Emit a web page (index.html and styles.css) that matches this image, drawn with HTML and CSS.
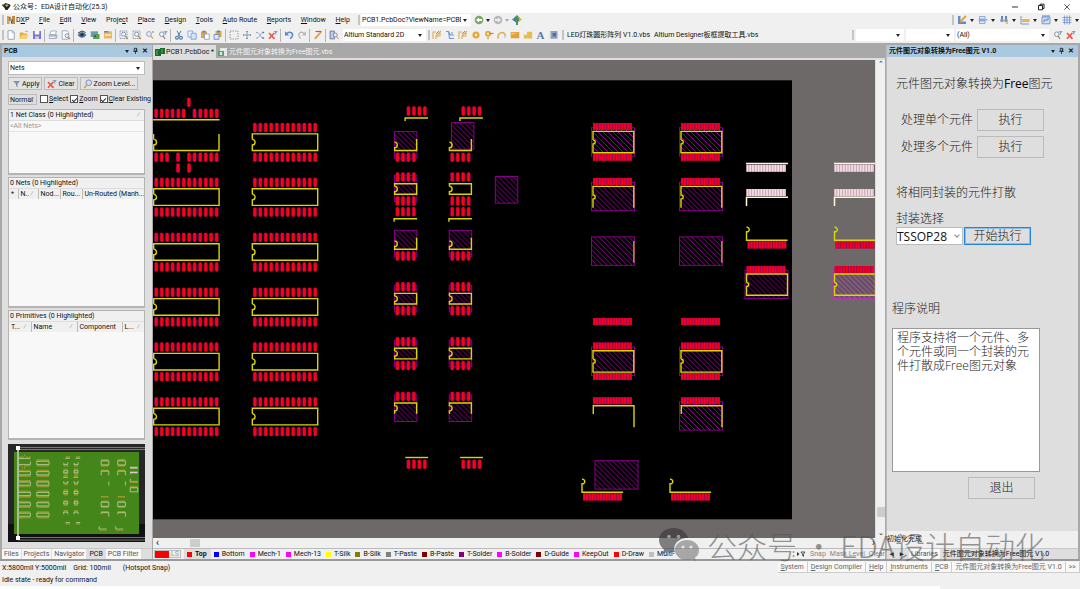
FILE: index.html
```html
<!DOCTYPE html>
<html lang="en">
<head>
<meta charset="utf-8">
<title>公众号：EDA设计自动化(25.3)</title>
<link rel="stylesheet" href="styles.css">
</head>
<body>
<svg class="defs" aria-hidden="true">
  <defs>
    <pattern id="hatch" width="5" height="5" patternUnits="userSpaceOnUse"><path d="M0 0L5 5M-1 4L1 6M4 -1L6 1" stroke="#8a008a" stroke-width="1"/></pattern>
    <g id="pad"><rect x="-2" y="-4.8" width="4" height="9.6" rx="1.8" class="pad-edge"/><rect x="-1.3" y="-4.4" width="2.8" height="8.8" rx="1.2" class="pad"/></g>
    <g id="pad4"><use href="#pad" x="-8.2"/><use href="#pad" x="-2.7"/><use href="#pad" x="2.7"/><use href="#pad" x="8.2"/></g>
    <g id="pad12"><use href="#pad4" x="-22"/><use href="#pad4"/><use href="#pad4" x="22"/></g>
    <g id="dip">
      <use href="#pad12" y="-14.7"/><use href="#pad12" y="15"/>
      <path class="silk" d="M-32.7 -2.8V-8.3H32.7V8.3H-32.7V2.8A2.8 2.8 0 0 0 -32.7 -2.8"/>
    </g>
    <rect id="h8" class="hatch" x="-11.2" y="-13.4" width="22.5" height="26.6"/>
    <g id="so8">
      <use href="#pad4" y="-12"/><use href="#pad4" y="12"/>
      <path class="silk" d="M-11 -2.7V-5.3H11V5.3H-11V2.7A2.7 2.7 0 0 0 -11 -2.7"/>
    </g>
    <g id="so8low"><use href="#pad4" y="12.3"/><path class="silk" d="M11 -6V5.5H-11V2.7A2.7 2.7 0 0 0 -11 -2.7"/></g>
    <g id="so8top"><use href="#pad4" y="-12"/><path class="silk" d="M11 5.500V-5.300H-11V-2.700A2.700 2.700 0 0 1 -11 2.700V5.500"/></g>
    <g id="so8cap"><use href="#pad4" y="-7"/><path class="silk" d="M-11.5 3V0H11.5"/></g>
    <g id="p14"><path class="fine-edge" d="M-19.5 0H19.5"/><path class="fine" d="M-19.2 0H19.5"/></g>
    <rect id="h28" class="hatch" x="-21.5" y="-14.3" width="43" height="28.4"/>
    <g id="ts">
      <use href="#h28"/><use href="#p14" y="-15.4" x="-.5"/><use href="#p14" y="15.3" x="-.5"/>
      <path class="silk" d="M-20 -2V-10.6H20.8V10.8H-20V2A2.2 2 0 0 0 -20 -2"/>
    </g>
    <g id="tstop"><use href="#p14" y="-15.4" x="-.5"/><path class="silk" d="M20.8 10.7V-10.6H-20V-2A2.2 2 0 0 1 -20 2V10.7"/></g>
    <g id="tslow"><path class="silk" d="M-20.5 -13A2.3 2.3 0 1 1 -20.5 -8.5V0H20.5"/><use href="#p14" y="4.6"/></g>
    <g id="white">
      <path class="pale-line" d="M746 163.5H788M788 197.3H746.5V206"/>
      <path class="pale-edge" d="M746.5 168.2H786M746.5 192.5H786"/><path class="pale" d="M746.5 168.2H786M746.5 192.5H786"/>
    </g>
    <g id="ts-end"><use href="#white"/><use href="#tslow" x="767" y="240.3"/>
      <use href="#h28" x="766.5" y="284.5"/><use href="#p14" x="766" y="269.4"/>
      <path class="silk" d="M746.5 282.5V274H787.5V295.3H746.5V286.5A2.2 2 0 0 0 746.5 282.5"/></g>
    <g id="dip-column"><use href="#dip" y="197.1"/><use href="#dip" y="252"/><use href="#dip" y="306.9"/><use href="#dip" y="361.7"/><use href="#dip" y="416.6"/></g>
    <g id="so-column">
      <use href="#so8cap" x="11" y="118"/><use href="#so8low" y="145"/>
      <use href="#so8" y="189"/><use href="#so8cap" y="218.7"/>
      <use href="#h8" y="243.7"/><use href="#so8low" y="243.7"/>
      <use href="#h8" y="298.7"/><use href="#so8" y="298.7"/>
      <use href="#h8" y="353.6"/><use href="#so8" y="353.6"/>
      <use href="#h8" y="408.3"/><use href="#so8top" y="408.3"/>
      <path class="silk" d="M-.3 457.5H22.5"/><use href="#pad4" x="11" y="464.2"/>
    </g>
    <g id="ts-column">
      <use href="#ts" y="142"/><use href="#h28" y="196.6"/><use href="#tstop" y="197"/>
      <use href="#h28" y="251.2"/><path class="silk dim" d="M20.8 241V262.7"/>
      <use href="#p14" x="-.5" y="321.5"/><use href="#ts" y="361.3"/>
    </g>
    <g id="layout">
      <use href="#dip" x="285" y="142.2"/><use href="#dip-column" x="285"/><use href="#dip-column" x="186.4"/>
      <use href="#pad" x="188.8" y="102.3"/>
      <use href="#pad4" x="164.3" y="113.4"/><use href="#pad" x="178.3" y="113.4"/><use href="#pad" x="183.6" y="113.4"/><use href="#pad" x="194.5" y="113.4"/><use href="#pad4" x="208.5" y="113.4"/>
      <path class="silk" d="M153 119.7H219.6M153.6 139.4V134M219 134V150.5H153.7V145A2.8 2.8 0 0 0 153.7 139.4"/>
      <use href="#pad" x="156.1" y="157.2"/><use href="#pad" x="161.6" y="157.2"/><use href="#pad" x="167" y="157.2"/><use href="#pad" x="178" y="157.2"/><use href="#pad" x="189" y="157.2"/><use href="#pad" x="194.5" y="157.2"/><use href="#pad4" x="208.4" y="157.2"/>
      <use href="#pad" x="178" y="168"/><use href="#pad" x="189" y="168"/>
      <use href="#h8" x="405.6" y="145"/><use href="#h8" x="405.6" y="188.7"/><use href="#h8" x="462.6" y="136"/><use href="#h8" x="506.5" y="189.9"/>
      <use href="#so-column" x="405.6"/><use href="#so-column" x="460.4"/>
      <use href="#ts-column" x="613"/><use href="#ts-column" x="701"/>
      <use href="#p14" x="612.5" y="400.8"/><path class="silk" d="M593.3 414V405.7H634V427.3"/>
      <use href="#h28" x="701" y="416"/><use href="#p14" x="700.5" y="400.8"/><path class="silk" d="M681.3 414V405.7H722V427.3"/>
      <use href="#h28" x="616.5" y="475"/>
      <use href="#tslow" x="602.5" y="492.3"/><use href="#tslow" x="690.5" y="492.3"/>
      <use href="#ts-end"/>
    </g>
  </defs>
  <symbol id="i-new" viewBox="0 0 10 10"><path d="M2 .7H6.5L8.3 2.6V9.3H2Z" fill="#fbfdff" stroke="#8798ad" stroke-width=".8"/><path d="M6.3 .8V2.8H8.3" fill="none" stroke="#8798ad" stroke-width=".7"/></symbol>
  <symbol id="i-open" viewBox="0 0 10 10"><path d="M.8 8.7V2.6H4L5 3.5H8V8.7Z" fill="#e3a938"/><path d="M.8 8.8L2.7 4.8H9.7L8 8.8Z" fill="#f8d277"/><path d="M6 2C7 .5 8.7 1 9 2.3" fill="none" stroke="#6b8db8" stroke-width=".7"/></symbol>
  <symbol id="i-save" viewBox="0 0 10 10"><path d="M1 1H9V9H1Z" fill="#7a77c9"/><path d="M2.7 1H7.3V4.5H2.7Z" fill="#f5f6ff"/><path d="M3 6.3H7V9H3Z" fill="#c8c9ee"/></symbol>
  <symbol id="i-print" viewBox="0 0 10 10"><path d="M3 1H8.5L7.3 4.5H2Z" fill="#fff" stroke="#8697ad" stroke-width=".7"/><path d="M.8 4.3H9.3V8L8 9H.8Z" fill="#a4b5c9"/><path d="M1.5 6.5H7.5V8H1.5Z" fill="#e6edf5"/></symbol>
  <symbol id="i-preview" viewBox="0 0 10 10"><path d="M1.2 .8H6L7.5 2.5V9.2H1.2Z" fill="#fff" stroke="#8697ad" stroke-width=".8"/><circle cx="6" cy="5.7" r="2" fill="#dcecf8" stroke="#7a8aa0" stroke-width=".8"/><path d="M7.5 7.2L9.3 9.2" stroke="#c59648" stroke-width="1.2"/></symbol>
  <symbol id="i-eye" viewBox="0 0 10 10"><path d="M.5 5Q5-1 9.5 5Q5 11 .5 5" fill="#5c7a98"/><circle cx="5" cy="4.8" r="1.8" fill="#24394e"/><path d="M1 3L5 1L8.5 2.5" stroke="#2d4053" fill="none"/></symbol>
  <symbol id="i-board" viewBox="0 0 10 10"><path d="M.7 1.3H8V7H.7Z" fill="#6b9cb8"/><path d="M3 4H9.5V9H3Z" fill="#58a152"/><path d="M4.5 5.5H6V7H4.5Z" fill="#264f2c"/></symbol>
  <symbol id="i-folder" viewBox="0 0 10 10"><path d="M1 1.3H9V8.5H1Z" fill="#edb75d"/><path d="M1 1H5L6 2.5H1Z" fill="#6a8cab"/><path d="M2 4H8V6H2Z" fill="#f9e1a7"/></symbol>
  <symbol id="i-zoom" viewBox="0 0 10 10"><path d="M1 1H8V8.5H1Z" fill="#eef2f8" stroke="#8496b1" stroke-width=".8" stroke-dasharray="1.5 .5"/><circle cx="4.6" cy="4.2" r="2" fill="#fff" stroke="#74869e" stroke-width=".9"/><path d="M6 5.8L8.8 9" stroke="#c28b3e" stroke-width="1.2"/></symbol>
  <symbol id="i-zoom2" viewBox="0 0 10 10"><circle cx="4" cy="4" r="2.4" fill="#e5effa" stroke="#8a9ab3" stroke-width=".9"/><path d="M5.8 5.8L8 8.7" stroke="#d3a24a" stroke-width="1.3"/><path d="M7 2H9M8 1V3" stroke="#8295af" stroke-width=".7"/></symbol>
  <symbol id="i-level" viewBox="0 0 10 10"><circle cx="5.8" cy="3.7" r="2.8" fill="#cfe3f7" stroke="#6f86a8" stroke-width=".9"/><path d="M3.8 6L1.2 9" stroke="#d3a24a" stroke-width="1.6"/></symbol>
  <symbol id="i-filter" viewBox="0 0 10 10"><circle cx="3.8" cy="4.2" r="2.3" fill="#eef3fa" stroke="#7b8ca7" stroke-width=".9"/><path d="M5 6L7 9" stroke="#a6813e" stroke-width="1.2"/><path d="M5.5 1H9.8L8 3.5V5.5L7 4V3Z" fill="#8da9ce"/></symbol>
  <symbol id="i-cut" viewBox="0 0 10 10"><path d="M3 .8L6 6.2M7 .8L4 6.2" stroke="#5977ab" stroke-width="1"/><circle cx="3" cy="7.7" r="1.4" fill="none" stroke="#4e6fae" stroke-width="1.1"/><circle cx="7" cy="7.7" r="1.4" fill="none" stroke="#4e6fae" stroke-width="1.1"/></symbol>
  <symbol id="i-copy" viewBox="0 0 10 10"><path d="M1 1H5.8V7H1Z" fill="#f4f9ff" stroke="#6f98d2" stroke-width=".8"/><path d="M4 3.3H9.2V9.2H4Z" fill="#d3e4fa" stroke="#6f98d2" stroke-width=".8"/></symbol>
  <symbol id="i-paste" viewBox="0 0 10 10"><path d="M1 1.5H7V8H1Z" fill="#dfa44a"/><path d="M2.5 .7H5.5V2.5H2.5Z" fill="#758097"/><path d="M4.5 4H9.3V9.3H4.5Z" fill="#fff" stroke="#7690b8" stroke-width=".7"/></symbol>
  <symbol id="i-stamp" viewBox="0 0 10 10"><path d="M2.500 1H8.500V7H2.500Z" fill="#dfa44a"/><path d="M4 .5H7V2.300H4Z" fill="#758097"/><path d="M1 4.500H6V9.300H1Z" fill="#dbe7f8" stroke="#5f83bd" stroke-width=".8"/></symbol>
  <symbol id="i-select" viewBox="0 0 10 10"><path d="M1 1H9V9H1Z" fill="none" stroke="#7d8794" stroke-width=".8" stroke-dasharray="1.5 1"/></symbol>
  <symbol id="i-move" viewBox="0 0 10 10"><path d="M5 1V9M1 5H9M4 2L5 1L6 2M4 8L5 9L6 8M2 4L1 5L2 6M8 4L9 5L8 6" fill="none" stroke="#7e92af" stroke-width=".9"/></symbol>
  <symbol id="i-cross" viewBox="0 0 10 10"><path d="M1 2.5H3L7 8H9M1 8H3L7 2.5H9" fill="none" stroke="#8c9cba" stroke-width=".9" stroke-dasharray="2 .5"/><path d="M7.5 1.3L9.5 2.5L7.5 3.7M7.5 6.7L9.5 8L7.5 9.2" fill="#4a78b5"/></symbol>
  <symbol id="i-clear" viewBox="0 0 10 10"><path d="M1 3L6.5 8.8M6.3 3L1 8.8" stroke="#ef5544" stroke-width="1.7"/><path d="M5.5 1H9.8L8.2 3.2V5.3L7.2 4V3Z" fill="#7f9fca"/></symbol>
  <symbol id="i-undo" viewBox="0 0 10 10"><path d="M2.2 3.8C5 1 9 2.5 8.5 5.3C8.2 7 7 8 6 8.5" fill="none" stroke="#6385d1" stroke-width="1.5"/><path d="M1 1.2V5.6H5.3Z" fill="#5f82cf"/></symbol>
  <symbol id="i-redo" viewBox="0 0 10 10"><path d="M7.8 3.8C5 1 1.4 2.5 2 5.3C2.2 7 3 8 4 8.5" fill="none" stroke="#b9b9b9" stroke-width="1.3"/><path d="M9 1.2V5.6H4.7Z" fill="#b9b9b9"/></symbol>
  <symbol id="i-wand" viewBox="0 0 10 10"><path d="M1.8 8.8L8 2" stroke="#e69b3b" stroke-width="1.8"/><path d="M2.500 1.500H8.500" stroke="#d05345" stroke-width="1.200"/></symbol>
  <symbol id="i-browse" viewBox="0 0 10 10"><path d="M1 1H5.5V9H1Z" fill="#a3aedd" stroke="#6d7598" stroke-width=".7"/><path d="M2 3H4.5M2 5H4.5M2 7H4.5" stroke="#fff" stroke-width=".7"/><circle cx="6.3" cy="5" r="2" fill="#e4eef8" stroke="#6d7d98" stroke-width=".8"/><path d="M7.7 6.7L9.5 9" stroke="#be8b45"/></symbol>
  <symbol id="i-route" viewBox="0 0 10 10"><path d="M1 9V2H4M4 9V6L9 1M4 6H8V2" fill="none" stroke="#e2aa4f" stroke-width="1.1"/><path d="M4 4L7 1" stroke="#6d94c8"/></symbol>
  <symbol id="i-diff" viewBox="0 0 10 10"><path d="M1 1.5H3.5L5.5 5H9M3.5 1.5L4.5 8.5H9M6 3H8" fill="none" stroke="#6f96d2" stroke-width="1.1"/></symbol>
  <symbol id="i-via" viewBox="0 0 10 10"><circle cx="5" cy="5" r="3.6" fill="#e8a83c"/><circle cx="5" cy="5" r="1.2" fill="#fff5d1"/></symbol>
  <symbol id="i-pin" viewBox="0 0 10 10"><circle cx="4" cy="3.7" r="3" fill="#e7a83d"/><path d="M3 6H5V9.3H3Z" fill="#edba5b"/><path d="M5 3.5H9.5" stroke="#6d94c8" stroke-width="1.2"/><circle cx="4" cy="3.7" r="1" fill="#fff"/></symbol>
  <symbol id="i-arc" viewBox="0 0 10 10"><path d="M1.2 8.5C0 3 6 0 8.8 5.5" fill="none" stroke="#e3ae58" stroke-width="1.5"/><path d="M8 5V8" stroke="#9aa9bd" stroke-width=".8"/></symbol>
  <symbol id="i-rect" viewBox="0 0 10 10"><path d="M.7 2H9.3V8.3H.7Z" fill="#e3a13c"/><path d="M1.5 2.8H8L1.5 5Z" fill="#f5c878"/></symbol>
  <symbol id="i-poly" viewBox="0 0 10 10"><path d="M.8 8.5V4.8H4V1.8H9.2V8.5Z" fill="#e8bc4d"/></symbol>
  <symbol id="i-comp" viewBox="0 0 10 10"><path d="M2 1H8.5V8.8H2Z" fill="#8da2bd"/><path d="M3.7 3H7V6.5H3.7Z" fill="#546c91"/><path d="M.7 2H2M.7 4H2M.7 6H2M.7 8H2" stroke="#8c98ac" stroke-width=".8"/></symbol>
  <symbol id="i-pencil" viewBox="0 0 10 10"><path d="M1 1V9H9V6.5H3.5V1Z" fill="#648bc9"/><path d="M3 7L9 1" stroke="#dba23e" stroke-width="1.8"/></symbol>
  <symbol id="i-align" viewBox="0 0 10 10"><path d="M1.5 1.5H7V4H1.5ZM1.5 6H7V8.5H1.5Z" fill="#e8eefa" stroke="#7a98ca" stroke-width=".8"/><path d="M.5 5H9.5" stroke="#5f87c4"/></symbol>
  <symbol id="i-find" viewBox="0 0 10 10"><path d="M2 1H4V5H2ZM6 1H8V5H6Z" fill="#6884b2"/><circle cx="3" cy="5.5" r="1.8" fill="#7c98c4"/><circle cx="7" cy="5.5" r="1.8" fill="#7c98c4"/><circle cx="8" cy="8" r="1.2" fill="#e5c05a"/></symbol>
  <symbol id="i-dim" viewBox="0 0 10 10"><path d="M1 1V9H9" fill="none" stroke="#7796c5"/><path d="M2 4H9.5V7H2Z" fill="#e6b650"/></symbol>
  <symbol id="i-room" viewBox="0 0 10 10"><path d="M1 2H9V8.8H1Z" fill="#cfdff5" stroke="#6f92c6" stroke-width=".9"/><path d="M3 7V5H7V3M1 1H9" stroke="#5d83bd" fill="none"/></symbol>
  <symbol id="i-grid" viewBox="0 0 10 10"><path d="M2.5 .5V9.5M5 .5V9.5M7.5 .5V9.5M.5 2.5H9.5M.5 5H9.5M.5 7.5H9.5" stroke="#6e94cf" stroke-width=".8"/></symbol>
  <symbol id="i-thumb" viewBox="0 0 6 8"><path d="M1.5 .8H4.5V4.2H1.5ZM.5 4.5H5.5M3 4.5V7.5" fill="none" stroke="#222"/><path d="M3.5 1H4.5V4H3.5Z" fill="#222"/></symbol>
</svg>

<div class="app">
  <header class="titlebar">
    <svg class="logo" viewBox="0 0 10 10"><path d="M0 4L4 1L9.5 3L9 5L6 9H4L2.5 6Z" fill="#222"/><path d="M3 3L6 2.5L7.5 4L5 5.5Z" fill="#c9a74e"/><path d="M0 3L3 4.5" stroke="#4c5d40"/></svg>
    <h1>公众号：EDA设计自动化(25.3)</h1>
    <div class="window-buttons">
      <button aria-label="Minimize"><svg viewBox="0 0 8 8"><path d="M1 4H7" stroke="#333"/></svg></button>
      <button aria-label="Restore"><svg viewBox="0 0 8 8"><path d="M1.5 2.5H5.5V6.8H1.5ZM3 2.3V1.2H7V5.5H5.8" fill="none" stroke="#222"/></svg></button>
      <button aria-label="Close"><svg viewBox="0 0 8 8"><path d="M1.3 1.3L6.7 6.7M6.7 1.3L1.3 6.7" stroke="#333" stroke-width=".8"/></svg></button>
    </div>
  </header>

  <nav class="menubar">
    <i class="grip"></i>
    <div class="menus">
      <button class="dxp"><svg class="ic" viewBox="0 0 10 10"><path d="M1 1H3.5V9H1Z" fill="#d8a04b"/><path d="M6 1H9V9H6Z" fill="#b98b4d"/><path d="M3 5H7M4 2V4M5.5 6V8.5" stroke="#5a452d" stroke-width="1.2"/></svg><span>D<u>X</u>P</span></button>
      <button><u>F</u>ile</button><button><u>E</u>dit</button><button><u>V</u>iew</button><button>Proje<u>c</u>t</button><button><u>P</u>lace</button><button><u>D</u>esign</button><button><u>T</u>ools</button><button><u>A</u>uto Route</button><button><u>R</u>eports</button><button><u>W</u>indow</button><button><u>H</u>elp</button>
    </div>
    <i class="grip"></i>
    <label class="combo address"><select aria-label="Document address"><option>PCB1.PcbDoc?ViewName=PCBEditor</option></select></label>
    <button class="nav" aria-label="Back"><svg class="ic" viewBox="0 0 10 10"><circle cx="5" cy="5" r="4.3" fill="#79a660"/><path d="M2 5L5 2.5V4H8V6H5V7.5Z" fill="#fff"/></svg><b class="caret"></b></button>
    <button class="nav" aria-label="Forward"><svg class="ic" viewBox="0 0 10 10"><circle cx="5" cy="5" r="4.3" fill="#b8b8b8"/><path d="M8 5L5 2.5V4H2V6H5V7.5Z" fill="#eee"/></svg><b class="caret pale-caret"></b></button>
    <button class="nav" aria-label="Up"><svg class="ic" viewBox="0 0 10 10"><path d="M5 0L8 3H2Z" fill="#4e9b4a"/><path d="M0 4.500L4 1.500V7.500Z" fill="#3b79c0"/><path d="M10 4.500L6 1.500V7.500Z" fill="#e5ac3b"/><path d="M3 3H7V6H6V10H4V6H3Z" fill="#4f8f5c"/></svg></button>
    <div class="menu-tools">
      <i class="grip"></i>
      <button aria-label="Drawing"><svg class="ic"><use href="#i-pencil"/></svg><b class="caret"></b></button>
      <button aria-label="Align"><svg class="ic"><use href="#i-align"/></svg><b class="caret"></b></button>
      <button aria-label="Find"><svg class="ic"><use href="#i-find"/></svg><b class="caret"></b></button>
      <button aria-label="Dimensions"><svg class="ic"><use href="#i-dim"/></svg><b class="caret"></b></button>
      <button aria-label="Rooms"><svg class="ic"><use href="#i-room"/></svg><b class="caret"></b></button>
      <button aria-label="Grid"><svg class="ic"><use href="#i-grid"/></svg><b class="caret"></b></button>
    </div>
  </nav>

  <div class="toolbar">
    <i class="grip"></i>
    <button aria-label="New"><svg class="ic"><use href="#i-new"/></svg></button><button aria-label="Open"><svg class="ic"><use href="#i-open"/></svg></button><button aria-label="Save"><svg class="ic"><use href="#i-save"/></svg></button><i class="sep"></i>
    <button aria-label="Print"><svg class="ic"><use href="#i-print"/></svg></button><button aria-label="Preview"><svg class="ic"><use href="#i-preview"/></svg></button><i class="sep"></i>
    <button aria-label="Views"><svg class="ic"><use href="#i-eye"/></svg></button><button aria-label="Board"><svg class="ic"><use href="#i-board"/></svg></button><button aria-label="Workspace"><svg class="ic"><use href="#i-folder"/></svg></button><i class="sep"></i>
    <button aria-label="Fit document"><svg class="ic"><use href="#i-zoom"/></svg></button><button aria-label="Zoom area"><svg class="ic"><use href="#i-zoom"/></svg></button><button aria-label="Zoom selected"><svg class="ic"><use href="#i-zoom2"/></svg></button><button aria-label="Zoom filtered"><svg class="ic"><use href="#i-filter"/></svg></button><i class="sep"></i>
    <button aria-label="Cut"><svg class="ic"><use href="#i-cut"/></svg></button><button aria-label="Copy"><svg class="ic"><use href="#i-copy"/></svg></button><button aria-label="Paste"><svg class="ic"><use href="#i-paste"/></svg></button><button aria-label="Rubber stamp"><svg class="ic"><use href="#i-stamp"/></svg></button><i class="sep"></i>
    <button aria-label="Select"><svg class="ic"><use href="#i-select"/></svg></button><button aria-label="Move"><svg class="ic"><use href="#i-move"/></svg></button><button aria-label="Deselect"><svg class="ic"><use href="#i-cross"/></svg></button><button aria-label="Clear filter"><svg class="ic"><use href="#i-clear"/></svg></button><i class="sep"></i>
    <button aria-label="Undo"><svg class="ic"><use href="#i-undo"/></svg></button><button aria-label="Redo"><svg class="ic"><use href="#i-redo"/></svg></button><i class="sep"></i>
    <button aria-label="Cross probe"><svg class="ic"><use href="#i-wand"/></svg></button><i class="sep"></i>
    <button aria-label="Browse"><svg class="ic"><use href="#i-browse"/></svg></button>
    <label class="combo view"><select aria-label="View configuration"><option>Altium Standard 2D</option></select></label>
    <i class="grip"></i>
    <button aria-label="Route"><svg class="ic"><use href="#i-route"/></svg></button><button aria-label="Differential pair"><svg class="ic"><use href="#i-diff"/></svg></button><button aria-label="Multi route"><svg class="ic"><use href="#i-route"/></svg></button><button aria-label="Pad"><svg class="ic"><use href="#i-via"/></svg></button><button aria-label="Via"><svg class="ic"><use href="#i-pin"/></svg></button><button aria-label="Arc"><svg class="ic"><use href="#i-arc"/></svg></button><button aria-label="Fill"><svg class="ic"><use href="#i-rect"/></svg></button><button aria-label="Polygon"><svg class="ic"><use href="#i-poly"/></svg></button><button class="letter">A</button><button aria-label="Component"><svg class="ic"><use href="#i-comp"/></svg></button>
    <i class="grip scripts-grip"></i>
    <button class="script-link">LED灯珠圆形阵列 V1.0.vbs</button><button class="script-link">Altium Designer板框提取工具.vbs</button>
    <div class="filters">
      <i class="grip"></i>
      <label class="combo"><select aria-label="Net filter"><option></option></select></label>
      <label class="combo"><select aria-label="Component filter"><option></option></select></label>
      <label class="combo wide"><select aria-label="Filter"><option>(All)</option></select></label>
      <button aria-label="Apply filter"><svg class="ic"><use href="#i-filter"/></svg></button><button aria-label="Clear filter"><svg class="ic"><use href="#i-clear"/></svg></button>
    </div>
  </div>

  <main class="workspace">
    <aside class="panel pcb-panel">
      <div class="panel-title"><h2>PCB</h2><b class="caret"></b><svg class="thumb"><use href="#i-thumb"/></svg><b class="x">✕</b></div>
      <div class="pcb-body">
        <label class="combo boxed"><select aria-label="Mode"><option>Nets</option></select></label>
        <div class="row">
          <button class="flat"><svg class="ic" viewBox="0 0 10 10"><path d="M2 2H9L6.5 5V8.5L5 7V5Z" fill="#7d93b8"/></svg>Apply</button>
          <button class="flat"><svg class="ic"><use href="#i-clear"/></svg>Clear</button>
          <button class="flat"><svg class="ic"><use href="#i-level"/></svg>Zoom Level...</button>
        </div>
        <div class="row checks">
          <label class="chev"><select aria-label="Highlight mode"><option>Normal</option></select></label>
          <label><input type="checkbox"><span><u>S</u>elect</span></label>
          <label><input type="checkbox" checked><span><u>Z</u>oom</span></label>
          <label><input type="checkbox" checked><span><u>C</u>lear Existing</span></label>
        </div>
        <section class="list classes"><h3>1 Net Class (0 Highlighted)<i class="sort">⁄</i></h3><p>&lt;All Nets&gt;</p></section>
        <section class="list nets"><h3>0 Nets (0 Highlighted)</h3>
          <table><tr><th class="c1">*</th><th class="c2">N.. <i>⁄</i></th><th class="c3">Nod...</th><th class="c4">Rou...</th><th>Un-Routed (Manh...</th></tr></table></section>
        <section class="list nets"><h3>0 Primitives (0 Highlighted)</h3>
          <table><tr><th class="p1">T... <i>⁄</i></th><th class="p2">Name <i>⁄</i></th><th class="p3">Component</th><th>L... <i>⁄</i></th></tr></table></section>
        <svg class="mini" viewBox="0 0 137 98" preserveAspectRatio="none">
          <rect width="137" height="98" fill="#272727"/><path d="M0 80H137V98H0Z" fill="#111"/>
          <rect x="6" y="8" width="125" height="82" fill="#45861b"/>
          <g transform="translate(-19 -8) scale(.189)"><use href="#layout"/></g>
          <path d="M10 3.5H137M10 5.5H137M10 93.5H137M10 96H137" stroke="#777"/><path d="M10 4V95" stroke="#a9bd96" stroke-width="2"/>
          <path d="M8 2H12V6H8ZM8 92H12V96H8Z" fill="#fff"/>
        </svg>
      </div>
      <nav class="panel-tabs"><button>Files</button><button>Projects</button><button>Navigator</button><button class="on">PCB</button><button>PCB Filter</button></nav>
    </aside>

    <section class="editor">
      <nav class="doc-tabs">
        <button class="on"><svg class="ic" viewBox="0 0 10 10"><path d="M0 2H6V9H0ZM5 1H10V7H5Z" fill="#176b2c"/><path d="M2 3V8M7 2V6" stroke="#64b06b"/></svg>PCB1.PcbDoc *</button>
        <button><svg class="ic" viewBox="0 0 10 10"><path d="M2 1H9V9H2Z" fill="#e5e9e5"/><path d="M0 4H6V9H0Z" fill="#5e9f6f"/><path d="M2 5L4 8M4 5L2 8" stroke="#fff"/></svg>元件图元对象转换为Free图元.vbs</button>
      </nav>
      <div class="canvas-row">
        <svg class="canvas" viewBox="153 60 722 478" preserveAspectRatio="xMinYMin slice" role="img" aria-label="PCB layout">
          <rect x="153" y="60" width="900" height="700" fill="#6e6969"/><rect x="153" y="80.3" width="639" height="439" fill="#000"/>
          <use href="#layout"/><use href="#ts-end" x="88" class="offboard"/>
        </svg>
        <div class="vscroll"><span>⌃</span><i></i><span>⌄</span></div>
      </div>
      <div class="hscroll"><span>‹</span><i></i><span>›</span></div>
      <nav class="layers">
        <button class="ls"><i></i>LS</button>
        <button class="on"><i class="red"></i>Top</button><button><i class="blue"></i>Bottom</button><button><i class="magenta"></i>Mech-1</button><button><i class="magenta"></i>Mech-13</button><button><i class="yellow"></i>T-Silk</button><button><i class="olive"></i>B-Silk</button><button><i class="gray"></i>T-Paste</button><button><i class="maroon"></i>B-Paste</button><button><i class="purple"></i>T-Solder</button><button><i class="magenta"></i>B-Solder</button><button><i class="maroon"></i>D-Guide</button><button><i class="magenta"></i>KeepOut</button><button><i class="red"></i>D-Draw</button><button><i class="silver"></i>Multi-</button>
        <div class="mask"><svg class="marks" viewBox="0 0 14 8"><path d="M1.500 1V3M1.500 5V7" stroke="#b8a800" stroke-width="1.500"/><path d="M5 2L7.500 4L5 6Z" fill="#333"/><path d="M9 2H13L11.500 4V6.500L10.500 5.500V4Z" fill="none" stroke="#333" stroke-width=".8"/></svg><button>Snap</button><button>Mask Level</button><button>Clear</button></div>
      </nav>
    </section>

    <aside class="panel tool-panel">
      <div class="panel-title"><h2>元件图元对象转换为Free图元 V1.0</h2><b class="caret"></b><svg class="thumb"><use href="#i-thumb"/></svg><b class="x">✕</b></div>
      <form class="tool-body">
        <h3>元件图元对象转换为<b>Free</b>图元</h3>
        <div class="action"><span>处理单个元件</span><button type="button">执行</button></div>
        <div class="action"><span>处理多个元件</span><button type="button">执行</button></div>
        <h3 class="scatter">将相同封装的元件打散</h3>
        <label class="pick-label" for="package">封装选择</label>
        <div class="pick"><label class="chev"><select id="package"><option>TSSOP28</option></select></label><button type="button" class="focus">开始执行</button></div>
        <label class="notes-label" for="notes">程序说明</label>
        <textarea id="notes" spellcheck="false">程序支持将一个元件、多个元件或同一个封装的元件打散成Free图元对象</textarea>
        <button type="button" class="exit">退出</button>
      </form>
      <p class="ready">初始化完成</p>
      <nav class="panel-tabs"><b class="arrow">◂</b><b class="arrow">▸</b><button>Libraries</button><button class="on">元件图元对象转换为Free图元 V1.0</button></nav>
    </aside>
  </main>

  <footer class="status">
    <div class="status-row">
      <span class="coords">X:5800mil Y:5000mil</span><span class="coords">Grid: 100mil</span><span>(Hotspot Snap)</span>
      <nav><button><u>S</u>ystem</button><button><u>D</u>esign Compiler</button><button><u>H</u>elp</button><button><u>I</u>nstruments</button><button><u>P</u>CB</button><button>元件图元对象转换为Free图元 V1.0</button><button>&gt;&gt;</button></nav>
    </div>
    <p>Idle state - ready for command</p>
    <div class="baseline"></div>
  </footer>

  <div class="watermark">
    <svg viewBox="0 0 42 34"><path d="M15.5 0C7 0 1 5.5 1 12C1 16 3 19 6 21.5L4.5 26L10 23.3Q13 24.5 17 24C14 16 22 9.5 30 10C28.5 4 22.5 0 15.5 0Z" fill="#333"/><path d="M29 12C22 12 17 16.5 17 22C17 28 22.5 32 29 32Q31.500 32 34 31L38 33.5L37 29.5C40 27.5 41 25 41 22C41 16.5 36 12 29 12Z" fill="#777"/><circle cx="11" cy="8.5" r="1.8" fill="#bbb"/><circle cx="20.5" cy="8.5" r="1.8" fill="#bbb"/><circle cx="25" cy="19" r="1.6" fill="#ddd"/><circle cx="33" cy="19" r="1.6" fill="#ddd"/></svg>
    <span>公众号 · EDA设计自动化</span>
  </div>
</div>
</body>
</html>
```
FILE: styles.css
```css
* { box-sizing: border-box; margin: 0; padding: 0; }
body { background: #f0f0f0; color: #111; font: 7px/10px Roboto, "Noto Sans CJK SC", sans-serif; overflow: hidden; }
button, select, input, textarea { font: inherit; color: inherit; background: none; border: 0; border-radius: 0; }
button { white-space: nowrap; }
select { appearance: none; width: 100%; height: 100%; outline: 0; padding: 0 1px; text-overflow: clip; }
h1, h2, h3, th { font-size: inherit; font-weight: 400; }
i { font-style: normal; }
.defs { position: absolute; width: 0; height: 0; }
.app { min-height: 100vh; display: flex; flex-direction: column; position: relative; }
.ic { width: 10px; height: 10px; display: block; flex: none; }
.caret { width: 0; height: 0; border: 2px solid transparent; border-top: 3px solid #222; border-bottom: 0; flex: none; }
.pale-caret { border-top-color: #aaa; }
.grip { width: 2px; height: 10px; background: #c4c4c4; flex: none; }
.sep { width: 1px; height: 13px; margin: 0 1px; background: #b5b5b5; flex: none; }
.combo { position: relative; display: block; background: #fff; height: 12px; flex: none; }
.combo::after { content: ""; position: absolute; right: 4px; top: 5px; border: 2px solid transparent; border-top: 3px solid #222; border-bottom: 0; pointer-events: none; }
.combo select { padding-right: 10px; }

.titlebar { display: flex; align-items: center; height: 13px; background: #fff; padding-left: 2px; }
.logo { width: 9px; height: 9px; margin-right: 2px; }
.titlebar h1 { flex: 1; }
.window-buttons { display: flex; }
.window-buttons button { width: 26px; display: flex; justify-content: center; }
.window-buttons svg { width: 8px; height: 8px; }

.menubar, .toolbar { display: flex; align-items: center; padding-left: 2px; background: #f0f0f0; }
.menubar { height: 14px; }
.menus { display: flex; justify-content: space-between; width: 344px; margin: 0 8px 0 2px; }
.menus .dxp { display: flex; }
.address { width: 110px; margin-left: 1px; }
.nav { display: flex; align-items: center; gap: 2px; margin-left: 3px; }
.menu-tools { margin-left: auto; display: flex; align-items: center; gap: 2px; }
.menu-tools button { display: flex; align-items: center; justify-content: space-around; width: 19px; }

.toolbar { height: 16px; }
.toolbar button:not(.script-link) { width: 13px; display: flex; justify-content: center; flex: none; }
.toolbar > .combo { width: 83px; margin: 0 2px 0 3px; }
.toolbar button.letter { font: 700 11px/10px "Liberation Serif", serif; color: #5478ac; }
.scripts-grip { margin: 0 2px; }
.script-link { padding: 0 3px 0 1px; }
.filters { display: flex; align-items: center; gap: 2px; margin-left: auto; padding-right: 3px; }
.filters .combo { width: 48px; }
.filters .combo.wide { width: 93px; }
.filters button:last-child { margin-left: -2px; }

.workspace { flex: 1; display: flex; min-height: 0; background: #a8a8a8; padding: 2px 2px 0; border-bottom: 2px solid #999; }
.panel { display: flex; flex-direction: column; background: #dedede; flex: none; min-height: 0; }
.panel-title { display: flex; align-items: center; gap: 4px; height: 12px; flex: none; background: #a9c9e0; padding: 0 4px 0 2px; }
.panel-title h2 { flex: 1; font-weight: 700; white-space: nowrap; }
.thumb { width: 5px; height: 8px; }
.x { font-size: 7px; }
.pcb-panel { width: 150px; }
.pcb-body { flex: 1; display: flex; flex-direction: column; padding: 4px 7px 6px 6px; min-height: 0; }
.boxed { border: 1px solid #bbb; height: 14px; }
.row { display: flex; gap: 2px; margin-top: 2px; flex: none; }
.flat { display: flex; align-items: center; gap: 1px; height: 13px; padding: 0 2px; border: 1px solid #bbb; background: #e3e3e3; }
.checks { align-items: center; gap: 2px; height: 12px; margin: 3px -6px 0 0; }
.checks label { display: flex; align-items: center; gap: 1px; white-space: nowrap; }
.chev { position: relative; border: 1px solid #bbb; }
.chev::after { content: ""; position: absolute; right: 3px; top: calc(50% - 3px); width: 3px; height: 3px; border: solid #888; border-width: 0 1px 1px 0; transform: rotate(45deg); pointer-events: none; }
.checks .chev { width: 35px; height: 11px; margin-right: 1px; }
input[type=checkbox] { appearance: none; width: 8px; height: 8px; border: 1px solid #555; background: #fff; display: grid; place-items: center; flex: none; }
input:checked::before { content: ""; width: 2px; height: 4px; border: solid #333; border-width: 0 1px 1px 0; transform: rotate(45deg); }
.list { border: 1px solid #b4b4b4; border-width: 1px 1px 2px; background: #f8f8f8; flex: 131 1 0; margin-top: 2px; min-height: 0; overflow: hidden; }
.list.classes { flex-grow: 65; margin-top: 4px; }
.list h3 { display: flex; justify-content: space-between; padding: 0 4px 0 1px; background: #f0f0f0; border-bottom: 1px solid #ddd; }
.list p { color: #999; padding-left: 1px; border-bottom: 1px solid #e4e4e4; }
.list i { color: #999; }
.list table { width: 100%; border-collapse: collapse; table-layout: fixed; background: #f0f0f0; }
.list th { text-align: left; height: 10px; padding-left: 2px; border-right: 1px solid #bbb; white-space: nowrap; overflow: hidden; }
.list th:last-child { border-right: 0; }
.list th i { float: right; margin-right: 4px; }
.c1 { width: 9px; } .c2 { width: 20px; } .c3, .c4 { width: 22px; }
.p1 { width: 22px; } .p2 { width: 46px; } .p3 { width: 45px; }
.mini { height: 98px; width: 100%; margin-top: 4px; flex: none; --pad: #b39a30; --edge: #82902a; --silk: #d4dfc0; --silk-width: 3.5; --hatch: none; --hatch-line: none; --white: #f2edc0; }

.panel-tabs { display: flex; height: 11px; flex: none; border-top: 1px solid #c8c8c8; }
.panel-tabs button { background: #f8f8f8; color: #555; padding: 0 2px; margin-right: 1px; flex: none; }
.panel-tabs .on { background: #dedede; color: #111; }

.editor { flex: 1; min-width: 0; display: flex; flex-direction: column; background: #f0f0f0; border: solid #a8a8a8; border-width: 0 1px; }
.doc-tabs { display: flex; height: 13px; background: #a8a8a8; flex: none; }
.doc-tabs button { display: flex; align-items: center; gap: 1px; padding: 0 2px; color: #f5f5f5; }
.doc-tabs .on { background: #dedede; color: #111; }
.canvas-row { flex: 1; display: flex; min-height: 0; border-top: 2px solid #dedede; }
.canvas { flex: 1; min-width: 0; height: 100%; }
.vscroll { width: 10px; display: flex; flex-direction: column; align-items: center; border-left: 1px solid #ddd; }
.vscroll span { line-height: 9px; }
.vscroll i { width: 8px; height: 10px; background: #cdcdcd; margin: auto 0 12px; }
.hscroll { display: flex; align-items: center; height: 10px; padding: 0 10px 0 3px; flex: none; }
.hscroll span { font-size: 10px; line-height: 8px; }
.hscroll i { width: 10px; height: 8px; background: #cdcdcd; margin: 0 auto 0 31px; }
.layers { display: flex; height: 11px; border-top: 1px solid #bbb; flex: none; overflow: hidden; }
.layers > button { display: flex; align-items: center; gap: 3px; padding: 0 2px 0 3px; flex: none; }
.layers > button > i { width: 5px; height: 5px; }
.layers .on { background: #dedede; font-weight: 700; padding-right: 4px; }
.layers > .ls { border: 1px solid #bbb; margin: 1px 3px 1px 1px; padding: 0 1px 0 0; color: #999; gap: 2px; width: 27px; }
.layers > .ls > i { width: 15px; height: 7px; background: #f00; }
.red { background: #f00; } .blue { background: #00f; } .magenta { background: #f0f; } .yellow { background: #ff0; } .olive { background: #808000; }
.gray { background: #808080; } .maroon { background: #800000; } .purple { background: #800080; } .silver { background: #c0c0c0; }
.mask { display: flex; align-items: center; gap: 4px; margin-left: auto; color: #888; }
.marks { width: 14px; height: 8px; }

.pad { fill: var(--pad, #fa0019); }
.pad-edge { fill: var(--edge, #85004c); }
.silk { fill: none; stroke: var(--silk, #d8d800); stroke-width: var(--silk-width, 1.4); }
.dim { stroke: var(--silk, #a8a800); }
.hatch { fill: var(--hatch, url(#hatch)); stroke: var(--hatch-line, #950095); stroke-width: .9; }
.fine-edge { stroke: var(--edge, #9c0055); stroke-width: 7; }
.fine { stroke: var(--pad, #f50022); stroke-width: 7; stroke-dasharray: 1.8 1; }
.pale-line { fill: none; stroke: var(--white, #fffdd8); stroke-width: 1.5; }
.pale-edge { stroke: #c4a2b4; stroke-width: 7; }
.pale { stroke: #f8dce5; stroke-width: 7; stroke-dasharray: 1.8 1; }
.offboard { --hatch-line: #c22dc2; }

.tool-panel { width: 192px; border-left: 1px solid #bbb; }
.tool-body { flex: 1; display: flex; flex-direction: column; align-items: flex-start; padding: 18px 0 0 5px; min-height: 0; font-size: 12px; font-family: "Open Sans", "Noto Sans CJK SC", sans-serif; line-height: 18px; font-weight: 300; color: #222; }
.tool-body h3 { font-weight: 300; margin: 0 4px 16px; }
.tool-body h3 b { font-weight: 400; color: #000; }
.tool-body button { border: 1px solid #bbb; width: 67px; height: 22px; line-height: 18px; }
.action { display: flex; align-items: center; gap: 4px; margin: 0 0 5px 9px; }
.tool-body .scatter { margin: 21px 4px 9px; }
.pick-label { margin-left: 4px; line-height: 16px; }
.pick { display: flex; margin-left: 4px; gap: 1px; }
.pick .chev { width: 67px; height: 18px; background: #fff; color: #111; font-weight: 400; }
.pick select { padding: 0; line-height: 16px; }
.tool-body .focus { border: 1px solid #2484d8; outline: 1px solid #8bbce8; outline-offset: -2px; height: 18px; line-height: 14px; }
.notes-label { margin-top: 55px; }
textarea { display: block; width: 148px; height: 144px; flex: 0 1 auto; margin-top: 10px; padding: 2px 4px; background: #fff; border: 1px solid #999; resize: none; line-height: 14px; overflow: hidden; }
.exit { margin: 5px 0 0 76px; flex: none; }
.ready { height: 17px; line-height: 17px; background: #f0f0f0; flex: none; }
.arrow { width: 10px; text-align: center; }
.arrow + button { margin-left: 2px; }

.status { flex: none; }
.status-row { display: flex; height: 13px; align-items: center; padding-left: 2px; }
.coords { margin-right: 7px; }
.coords + .coords { margin-right: 12px; }
.status-row nav { display: flex; margin-left: auto; height: 11px; }
.status-row nav button { background: #f8f8f8; color: #666; border: solid #ccc; border-width: 0 1px 1px 0; padding: 0 3px; }
.status p { padding-left: 2px; height: 12px; line-height: 12px; }
.baseline { height: 4px; width: 87%; background: #fff; }
.watermark { position: absolute; left: 658px; bottom: 27px; display: flex; align-items: center; gap: 7px; opacity: .6; color: #555; font: 300 30px/36px "Noto Sans CJK SC", sans-serif; white-space: nowrap; pointer-events: none; }
.watermark svg { width: 42px; height: 34px; }
```
